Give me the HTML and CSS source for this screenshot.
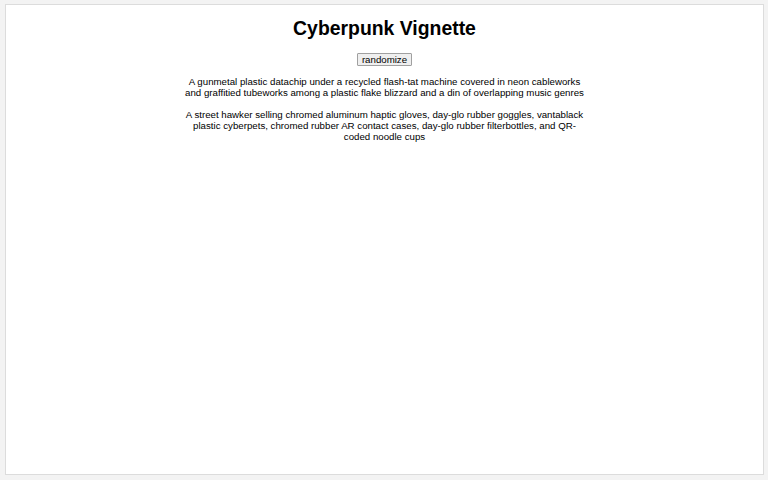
FILE: index.html
```html
<!DOCTYPE html>
<html lang="en">
<head>
  <meta charset="UTF-8">
  <title>Cyberpunk Vignette</title>
  <link rel="stylesheet" href="styles.css">
</head>
<body>
  <div class="page">
    <h1>Cyberpunk Vignette</h1>

    <button class="randomize">randomize</button>

    <div class="vignette">
      <p>A gunmetal plastic datachip under a recycled flash-tat machine covered in neon cableworks and graffitied tubeworks among a plastic flake blizzard and a din of overlapping music genres</p>
      <p>A street hawker selling chromed aluminum haptic gloves, day-glo rubber goggles, vantablack plastic cyberpets, chromed rubber AR contact cases, day-glo rubber filterbottles, and QR-coded noodle cups</p>
    </div>
  </div>
</body>
</html>
```

FILE: styles.css
```css
html {
  background: #f3f3f3;
}

body {
  font-family: "Liberation Sans", Arial, sans-serif;
  margin: 4px 4px 4px 5px;
  padding: 0;
}

.page {
  background: #fff;
  border: 1px solid #dcdcdc;
  height: 471px;
  box-sizing: border-box;
  text-align: center;
  padding-top: 12px;
}

.page h1 {
  font-size: 19.4px;
  line-height: 22px;
  font-weight: bold;
  color: #000;
  margin: 0 0 10px;
}

.randomize {
  font-family: "Liberation Sans", Arial, sans-serif;
  font-size: 9.7px;
  line-height: 11px;
  padding: 0 4px;
  background: #efefef;
  border: 1px solid #a0a0a0;
  border-radius: 1px;
  color: #000;
}

.vignette {
  max-width: 400px;
  margin: 9px auto 0;
}

.vignette p {
  font-size: 9.7px;
  line-height: 11px;
  margin: 0 0 11px;
}
```
